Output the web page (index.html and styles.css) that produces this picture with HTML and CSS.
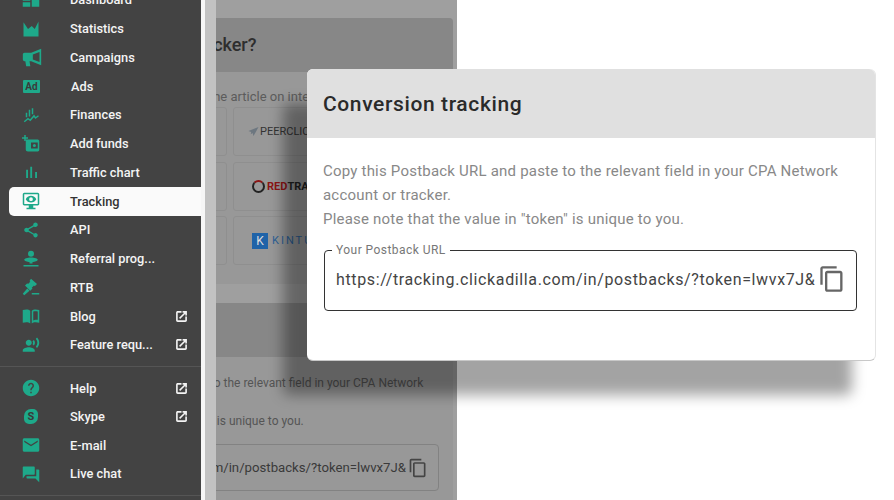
FILE: index.html
```html
<!DOCTYPE html>
<html lang="en">
<head>
    <meta charset="UTF-8">
    <meta name="viewport" content="width=device-width, initial-scale=1.0">
    <title>Conversion tracking</title>
    <link rel="stylesheet" href="styles.css">
</head>
<body>
    <div class="app">
        <nav class="sidebar">
            <ul class="menu">
                <li class="item"><svg class="icon" viewBox="0 0 24 24"><path d="M1 13h10V3H1v10zm0 8h10v-6H1v6zm12 0h10V11H13v10zm0-18v6h10V3H13z"/></svg><span class="label">Dashboard</span></li>
                <li class="item"><svg class="icon" viewBox="0 0 24 24"><path d="M2 3l6 9 5-4 4 4 5-10v20H2z"/></svg><span class="label">Statistics</span></li>
                <li class="item"><svg class="icon icon-big" viewBox="0 0 24 24"><path fill-rule="evenodd" d="M1 9c0-1 1-2 2-2h8l12-5v20l-12-5H9l1 6H5l-1-6H3c-1 0-2-1-2-2zm12 0v6l8 3V6z"/></svg><span class="label">Campaigns</span></li>
                <li class="item"><span class="ad-badge">Ad</span><span class="label">Ads</span></li>
                <li class="item"><svg class="icon" viewBox="0 0 24 24"><path d="M9 5h2v9H9zM13 3h2v8h-2zM5 9h2v6H5z"/><path class="line" d="M3 21l5-4 3 2 5-6 2 3 4-3"/></svg><span class="label">Finances</span></li>
                <li class="item"><svg class="icon" viewBox="0 0 24 24"><path fill-rule="evenodd" d="M5 6h16c1 0 2 1 2 2v12c0 1-1 2-2 2H8c-2 0-3-1-3-3zm7 4v8h9v-8z"/><circle cx="16.5" cy="14" r="2"/><path d="M3 0h2v3h3v2H5v3H3V5H0V3h3z"/></svg><span class="label">Add funds</span></li>
                <li class="item"><svg class="icon" viewBox="0 0 24 24"><path d="M5.5 9H8v11H5.5zM11 5h2.5v15H11zM17.5 12H20v8h-2.5z"/></svg><span class="label">Traffic chart</span></li>
                <li class="item active"><svg class="icon" viewBox="0 0 24 24"><path fill-rule="evenodd" d="M3 1h18c1 0 2 1 2 2v13c0 1-1 2-2 2h-6v3h3v2H6v-2h3v-3H3c-1 0-2-1-2-2V3c0-1 1-2 2-2zm0 2v13h18V3z"/><path fill-rule="evenodd" d="M12 5c3 0 6 2 7 4.5-1 2.5-4 4.5-7 4.5S6 12 5 9.5C6 7 9 5 12 5zm0 2a2.5 2.5 0 1 0 0 5 2.5 2.5 0 0 0 0-5z"/></svg><span class="label">Tracking</span></li>
                <li class="item"><svg class="icon" viewBox="0 0 24 24"><path d="M18 16.08c-.76 0-1.44.3-1.96.77L8.91 12.7c.05-.23.09-.46.09-.7s-.04-.47-.09-.7l7.05-4.11c.54.5 1.25.81 2.04.81 1.66 0 3-1.34 3-3s-1.34-3-3-3-3 1.34-3 3c0 .24.04.47.09.7L8.04 9.81C7.5 9.31 6.79 9 6 9c-1.66 0-3 1.34-3 3s1.34 3 3 3c.79 0 1.5-.31 2.04-.81l7.12 4.16c-.05.21-.08.43-.08.65 0 1.61 1.31 2.92 2.92 2.92 1.61 0 2.92-1.31 2.92-2.92s-1.31-2.92-2.92-2.92z"/></svg><span class="label">API</span></li>
                <li class="item"><svg class="icon" viewBox="0 0 24 24"><circle cx="12" cy="5" r="4"/><path d="M12 10c5 0 9 1.5 9 3s-4 3-7 3v2h-4v-2c-3 0-7-1.5-7-3s4-3 9-3zM2 20h20v2H2z"/></svg><span class="label">Referral prog...</span></li>
                <li class="item"><svg class="icon" viewBox="0 0 24 24"><path d="M12 1l8 7-3 3-1-1-3 3 1 1-3 3-7-7 3-3 1 1 3-3-1-1zM7 14l3 3-7 6-2-2zM13 20h10v2H13z"/></svg><span class="label">RTB</span></li>
                <li class="item"><svg class="icon" viewBox="0 0 24 24"><path fill-rule="evenodd" d="M1 4c4-1 8-1 10 1v17c-2-2-6-2-10-1zM13 5c2-2 6-2 10-1v17c-4-1-8-1-10 1zm2 1v12c2-1 4-1 6-1V6c-2-.3-4-.3-6 0z"/></svg><span class="label">Blog</span><svg class="ext" viewBox="0 0 24 24"><path d="M19 19H5V5h7V2H5C3.3 2 2 3.3 2 5v14c0 1.7 1.3 3 3 3h14c1.7 0 3-1.3 3-3v-7h-3zM14 2v3h3l-9.5 9.5 2 2L19 7v3h3V2z"/></svg></li>
                <li class="item"><svg class="icon" viewBox="0 0 24 24"><path d="M9 13c2.21 0 4-1.79 4-4s-1.79-4-4-4-4 1.79-4 4 1.79 4 4 4zm0 2c-2.67 0-8 1.34-8 4v2h16v-2c0-2.66-5.33-4-8-4zm6.76-9.64l-1.68 1.69c.84 1.18.84 2.71 0 3.89l1.68 1.69c2.02-2.02 2.02-5.07 0-7.27zM20.07 2l-1.63 1.63c2.77 3.02 2.77 7.56 0 10.74L20.07 16c3.9-3.89 3.91-9.95 0-14z"/></svg><span class="label">Feature requ...</span><svg class="ext" viewBox="0 0 24 24"><path d="M19 19H5V5h7V2H5C3.3 2 2 3.3 2 5v14c0 1.7 1.3 3 3 3h14c1.7 0 3-1.3 3-3v-7h-3zM14 2v3h3l-9.5 9.5 2 2L19 7v3h3V2z"/></svg></li>
            </ul>
            <ul class="menu menu-second">
                <li class="item"><svg class="icon" viewBox="0 0 24 24"><path d="M12 1C5.9 1 1 5.9 1 12s4.9 11 11 11 11-4.9 11-11S18.1 1 12 1zm1 18h-2v-2h2v2zm2.07-7.75l-.9.92C13.45 12.9 13 13.5 13 15h-2v-.5c0-1.1.45-2.1 1.17-2.83l1.24-1.26c.37-.36.59-.86.59-1.41 0-1.1-.9-2-2-2s-2 .9-2 2H8c0-2.21 1.79-4 4-4s4 1.79 4 4c0 .88-.36 1.68-.93 2.25z"/></svg><span class="label">Help</span><svg class="ext" viewBox="0 0 24 24"><path d="M19 19H5V5h7V2H5C3.3 2 2 3.3 2 5v14c0 1.7 1.3 3 3 3h14c1.7 0 3-1.3 3-3v-7h-3zM14 2v3h3l-9.5 9.5 2 2L19 7v3h3V2z"/></svg></li>
                <li class="item"><span class="skype-badge">S</span><span class="label">Skype</span><svg class="ext" viewBox="0 0 24 24"><path d="M19 19H5V5h7V2H5C3.3 2 2 3.3 2 5v14c0 1.7 1.3 3 3 3h14c1.7 0 3-1.3 3-3v-7h-3zM14 2v3h3l-9.5 9.5 2 2L19 7v3h3V2z"/></svg></li>
                <li class="item"><svg class="icon" viewBox="0 0 24 24"><path d="M21 3H3C1.9 3 1 3.9 1 5v14c0 1.1.9 2 2 2h18c1.1 0 2-.9 2-2V5c0-1.1-.9-2-2-2zm0 5l-9 5.5L3 8V6l9 5.500L21 6z"/></svg><span class="label">E-mail</span></li>
                <li class="item"><svg class="icon" viewBox="0 0 24 24"><path d="M21 6h-2v9H6v2c0 .55.45 1 1 1h11l5 5V7c0-.55-.45-1-2-1zm-4 6V3c0-.55-.45-1-1-1H2c-.55 0-1 .45-1 1v15l4-5h11c.55 0 1-.45 1-1z"/></svg><span class="label">Live chat</span></li>
            </ul>
        </nav>
        <div class="strip"></div>
        <main class="page">
            <div class="page-inner">
                <section class="card">
                    <h2 class="card-title">Do you use a tracker?</h2>
                    <p class="card-note">For details please read the article on integrations</p>
                    <div class="logos">
                        <div class="logo"></div>
                        <div class="logo"><svg class="rocket" viewBox="0 0 24 24"><path d="M23 2L12 22l-2-7-4 3 1-5-6-2z"/></svg><span class="peer">PEERCLICK</span></div>
                        <div class="logo"></div>
                        <div class="logo"></div>
                        <div class="logo"><span class="red-ring"></span><span class="red">RED</span><span class="track">TRACK</span></div>
                        <div class="logo"></div>
                        <div class="logo"></div>
                        <div class="logo"><span class="kintura-mark">K</span><span class="kintura">KINTURA</span></div>
                        <div class="logo"></div>
                    </div>
                </section>
                <section class="card">
                    <h2 class="card-title">Postback URL</h2>
                    <p class="card-text">Copy this Postback URL and paste to the relevant field in your CPA Network<br>account or tracker.<br>Please note that the value in "token" is unique to you.</p>
                    <div class="card-field">
                        <span>https://tracking.clickadilla.com/in/postbacks/?token=lwvx7J&amp;</span>
                        <svg class="copy copy-small" viewBox="0 0 24 24"><path d="M16 1H4c-1.1 0-2 .9-2 2v14h2V3h12V1zm3 4H8c-1.1 0-2 .9-2 2v14c0 1.1.9 2 2 2h11c1.1 0 2-.9 2-2V7c0-1.1-.9-2-2-2zm0 16H8V7h11v14z"/></svg>
                    </div>
                </section>
            </div>
        </main>
    </div>

    <div class="modal">
        <h1 class="modal-title">Conversion tracking</h1>
        <div class="modal-body">
            <p class="modal-text">Copy this Postback URL and paste to the relevant field in your CPA Network account or tracker.<br>Please note that the value in "token" is unique to you.</p>
            <fieldset class="url-field">
                <legend>Your Postback URL</legend>
                <span class="url">https://tracking.clickadilla.com/in/postbacks/?token=lwvx7J&amp;</span>
                <svg class="copy" viewBox="0 0 24 24"><path d="M16 1H4c-1.1 0-2 .9-2 2v14h2V3h12V1zm3 4H8c-1.1 0-2 .9-2 2v14c0 1.1.9 2 2 2h11c1.1 0 2-.9 2-2V7c0-1.1-.9-2-2-2zm0 16H8V7h11v14z"/></svg>
            </fieldset>
        </div>
    </div>
</body>
</html>
```

FILE: styles.css
```css
* {
    box-sizing: border-box;
}
html, body {
    height: 100%;
}
body {
    margin: 0;
    background-color: #fff;
    color: #222;
    font-family: Roboto, "Liberation Sans", sans-serif;
    overflow: hidden;
}
.app {
    display: flex;
    width: 457px;
    height: 500px;
    overflow: hidden;
}
.sidebar {
    flex: none;
    width: 201px;
    height: 500px;
    background-color: #434343;
    overflow: hidden;
}
.menu {
    list-style: none;
    margin: -14.5px 0 0;
    padding: 0 0 7px 9px;
    border-bottom: 1px solid #555;
}
.menu-second {
    margin: 0;
    padding-top: 7px;
}
.menu-second .item {
    height: 28.4px;
}
.item {
    display: flex;
    align-items: center;
    height: 28.75px;
    padding-right: 13px;
    color: #f4f4f4;
    font-size: 12.8px;
    font-weight: 500;
}
.item.active {
    background-color: #fafafa;
    border-radius: 5px 0 0 5px;
    color: #333;
}
.icon {
    flex: none;
    width: 18px;
    height: 18px;
    margin-left: 13px;
    fill: #1ea98a;
}
.icon-big {
    width: 20px;
    height: 20px;
    margin-right: -2px;
}
.icon .line {
    fill: none;
    stroke: #1ea98a;
    stroke-width: 2;
}
.label {
    flex: 1;
    margin-left: 30px;
    white-space: nowrap;
}
.ad-badge {
    flex: none;
    width: 17px;
    height: 13px;
    margin-left: 14px;
    margin-right: 1px;
    background-color: #1ea98a;
    border-radius: 1px;
    color: #3a3a3a;
    font-size: 10px;
    font-weight: 700;
    line-height: 13px;
    text-align: center;
}
.skype-badge {
    flex: none;
    width: 14px;
    height: 15px;
    margin-left: 15px;
    margin-right: 2px;
    background-color: #1ea98a;
    border-radius: 7px 5px 7px 5px;
    color: #3a3a3a;
    font-size: 11px;
    font-weight: 700;
    line-height: 15px;
    text-align: center;
}
.ext {
    flex: none;
    width: 13px;
    height: 13px;
    fill: #f4f4f4;
}
.strip {
    flex: none;
    width: 15px;
    height: 500px;
    background-color: #c2c2c2;
    border-left: 4px solid #f6f6f6;
}
.page {
    flex: 1;
    min-width: 0;
    background-color: #9f9f9f;
    overflow: hidden;
}
.page-inner {
    width: 393px;
    margin-left: -156px;
    padding-top: 18px;
}
.card {
    height: 266px;
    margin-bottom: 19px;
    background-color: #989898;
    border-radius: 4px;
}
.card-title {
    height: 54px;
    margin: 0;
    padding-left: 24px;
    background-color: #878787;
    border-radius: 4px 4px 0 0;
    color: #2e2e2e;
    font-size: 18px;
    font-weight: 500;
    line-height: 54px;
    white-space: nowrap;
}
.card-note {
    margin: 16px 0 0;
    padding-left: 15px;
    color: #5c5c5c;
    font-size: 13px;
    line-height: 17px;
    white-space: nowrap;
}
.logos {
    display: grid;
    grid-template-columns: repeat(3, 151px);
    grid-auto-rows: 49px;
    gap: 5.5px 6px;
    padding: 2px 16px;
}
.logo {
    display: flex;
    align-items: center;
    padding-left: 14px;
    border: 1px solid #8f8f8f;
    border-radius: 3px;
    font-size: 11px;
    white-space: nowrap;
    overflow: hidden;
}
.rocket {
    flex: none;
    width: 11px;
    height: 11px;
    margin-right: 1px;
    fill: #6d7780;
}
.peer {
    color: #333;
}
.red-ring {
    flex: none;
    width: 13px;
    height: 13px;
    margin: 0 2px 0 4px;
    border: 2.5px solid #222;
    border-top-color: #8c1515;
    border-radius: 50%;
}
.red {
    color: #8c1515;
    font-weight: 700;
}
.track {
    color: #222;
    font-weight: 700;
}
.kintura-mark {
    flex: none;
    width: 16px;
    height: 16px;
    margin: 0 4px;
    background-color: #1f63a8;
    color: #ddd;
    font-size: 12px;
    line-height: 16px;
    text-align: center;
}
.kintura {
    color: #2d6197;
    letter-spacing: 2px;
}
.card-text {
    height: 57px;
    margin: 17px 0 0 -36px;
    color: #555;
    font-size: 12px;
    line-height: 19px;
    white-space: nowrap;
}
.card-field {
    display: flex;
    align-items: center;
    justify-content: flex-end;
    height: 47px;
    margin: 13px 14px 0 16px;
    padding-right: 10px;
    border: 1px solid #828282;
    border-radius: 4px;
    color: #3a3a3a;
    font-size: 13.2px;
    white-space: nowrap;
    overflow: hidden;
}
.modal {
    position: absolute;
    left: 307px;
    top: 69px;
    width: 569px;
    height: 292px;
    background-color: #fff;
    border-bottom: 1px solid #c8c8c8;
    border-right: 1px solid #e4e4e4;
    border-radius: 6px;
    box-shadow: -24px 34px 14px rgba(0, 0, 0, 0.36);
}
.modal-title {
    height: 69px;
    margin: 0;
    padding-left: 16px;
    background-color: #e0e0e0;
    border-radius: 6px 6px 0 0;
    color: #2a2a2a;
    font-size: 21px;
    font-weight: 500;
    letter-spacing: 0.62px;
    line-height: 71px;
}
.modal-body {
    padding: 21px 18px 0 16px;
}
.modal-text {
    margin: 0;
    color: #888;
    font-size: 15px;
    letter-spacing: 0.21px;
    line-height: 24px;
}
.url-field {
    display: flex;
    align-items: center;
    height: 68px;
    margin: 12px 0 0 1px;
    padding: 0 10px 9px 11px;
    border: 1px solid #333;
    border-radius: 4px;
    min-width: 0;
}
.url-field legend {
    padding: 0 4px;
    margin-left: -4px;
    color: #777;
    font-size: 12px;
    letter-spacing: 0.45px;
    line-height: 14px;
}
.url {
    flex: 1;
    color: #444;
    font-size: 16px;
    letter-spacing: 0.63px;
    white-space: nowrap;
    overflow: hidden;
}
.copy {
    flex: none;
    width: 28px;
    height: 28px;
    margin-left: 3px;
    fill: #666;
}
.copy-small {
    width: 20px;
    height: 20px;
    margin-left: 2px;
    fill: #444;
}
```
